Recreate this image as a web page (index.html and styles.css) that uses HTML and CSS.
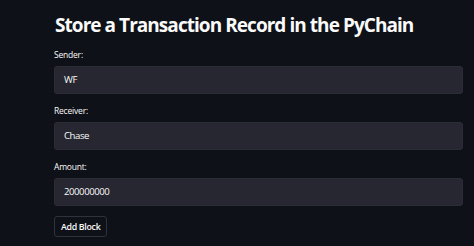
FILE: index.html
```html
<!DOCTYPE html>
<html>
<head>
<meta charset="utf-8">
<link rel="stylesheet" href="styles.css">
</head>
<body>
<main class="page">
  <h1 class="title">Store a Transaction Record in the PyChain</h1>
  <div class="field">
    <label class="label">Sender:</label>
    <div class="input">WF</div>
  </div>
  <div class="field">
    <label class="label">Receiver:</label>
    <div class="input">Chase</div>
  </div>
  <div class="field">
    <label class="label">Amount:</label>
    <div class="input">200000000</div>
  </div>
  <button class="btn">Add Block</button>
</main>
</body>
</html>
```

FILE: styles.css
```css
html, body {
  margin: 0;
  padding: 0;
  background: #0e1117;
  width: 474px;
  height: 246px;
  overflow: hidden;
}
body {
  font-family: "Open Sans", "Noto Sans", sans-serif;
  color: #fafafa;
}
.page {
  display: flex;
  flex-direction: column;
  align-items: flex-start;
  padding: 10px 11px 0 54px;
}
.title {
  margin: 0 0 0 1px;
  font-size: 19px;
  font-weight: 700;
  line-height: 30px;
  letter-spacing: -0.95px;
  white-space: nowrap;
  height: 38px;
}
.field {
  display: flex;
  flex-direction: column;
  align-self: stretch;
  margin-bottom: 10px;
}
.label {
  font-size: 8.5px;
  line-height: 14px;
  height: 18px;
  letter-spacing: -0.2px;
  color: #fafafa;
}
.input {
  height: 28px;
  box-sizing: border-box;
  background: #262730;
  border: 1px solid #2b2c36;
  border-radius: 3px;
  padding: 0 9px;
  font-size: 9.6px;
  letter-spacing: -0.45px;
  line-height: 26px;
  color: #fafafa;
}
.btn {
  height: 21px;
  box-sizing: border-box;
  padding: 0 6px;
  background: #0e1117;
  border: 1px solid #2f323b;
  border-radius: 3px;
  color: #fafafa;
  font-family: "Open Sans", "Noto Sans", sans-serif;
  font-size: 8.8px;
  letter-spacing: -0.3px;
  font-weight: 600;
}
```
